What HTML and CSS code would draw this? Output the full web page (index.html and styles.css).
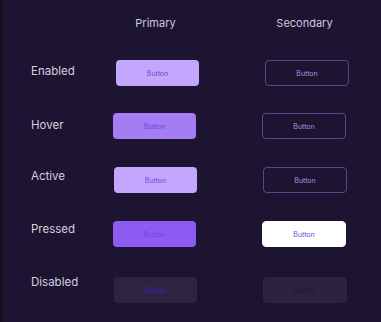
FILE: index.html
```html
<!DOCTYPE html>
<html lang="en">
<head>
    <meta charset="UTF-8">
    <meta name="viewport" content="width=device-width, initial-scale=1.0">
    <title>Button States</title>
    <link rel="stylesheet" href="styles.css">
</head>
<body>
    <div class="board">
        <header class="head-row">
            <span class="col-title">Primary</span>
            <span class="col-title col-title--secondary">Secondary</span>
        </header>

        <section class="states">
            <div class="row row--enabled">
                <span class="label">Enabled</span>
                <button class="btn btn-primary">Button</button>
                <button class="btn btn-secondary">Button</button>
            </div>
            <div class="row row--hover">
                <span class="label">Hover</span>
                <button class="btn btn-primary is-hover">Button</button>
                <button class="btn btn-secondary">Button</button>
            </div>
            <div class="row row--active">
                <span class="label">Active</span>
                <button class="btn btn-primary">Button</button>
                <button class="btn btn-secondary">Button</button>
            </div>
            <div class="row row--pressed">
                <span class="label">Pressed</span>
                <button class="btn btn-primary is-pressed">Button</button>
                <button class="btn btn-secondary is-pressed">Button</button>
            </div>
            <div class="row row--disabled">
                <span class="label">Disabled</span>
                <button class="btn btn-primary is-disabled">Button</button>
                <button class="btn btn-secondary is-disabled">Button</button>
            </div>
        </section>
    </div>
</body>
</html>
```

FILE: styles.css
```css
body {
    margin: 0;
    padding: 0;
    background: #1c1430;
    font-family: Inter, "Noto Sans", sans-serif;
    color: #d2cddd;
}

.board {
    min-height: 322px;
    border-left: 3px solid #161020;
    padding-left: 28px;
    box-sizing: border-box;
}

.head-row {
    display: flex;
    height: 46px;
    align-items: center;
}

.col-title {
    font-size: 11px;
    color: #cfc9dc;
    width: 83px;
    text-align: center;
    margin-left: 83px;
}

.col-title--secondary {
    margin-left: 66px;
}

.states {
    display: flex;
    flex-direction: column;
    gap: 28px;
    padding-top: 14px;
}

.row {
    display: flex;
    align-items: center;
    height: 26px;
}

.label {
    width: 83px;
    font-size: 11.5px;
    color: #d4d0de;
    padding-bottom: 4px;
}

.btn {
    width: 83px;
    height: 26px;
    border-radius: 4px;
    border: 0;
    padding: 0;
    font-family: Inter, "Noto Sans", sans-serif;
    font-size: 7px;
    color: #7446d4;
    box-sizing: border-box;
}

.btn-primary {
    background: #c3a6fd;
}

.btn-primary.is-hover {
    background: #a57cf4;
}

.btn-primary.is-pressed {
    background: #8c5cf2;
}

.btn-primary.is-disabled {
    background: #2d2442;
    color: #4a1fb0;
}

.btn-secondary {
    width: 84px;
    margin-left: 66px;
    background: transparent;
    border: 1px solid #5b4688;
    color: #a890e0;
}

.btn-secondary.is-pressed {
    background: #ffffff;
    border-color: #ffffff;
    color: #7446d4;
}

.btn-secondary.is-disabled {
    background: #2b2340;
    border-color: #2b2340;
    color: #221a34;
}

/* the artboard is hand placed, so rows drift a pixel or two */
.row--enabled .btn-primary { margin-left: 2px; }
.row--hover { margin-top: -1px; }
.row--hover .label { padding-bottom: 3px; }
.row--hover .btn-primary,
.row--pressed .btn-primary { margin-left: -1px; }
.row--active .label { padding-bottom: 9px; }
.row--pressed .label { padding-bottom: 10px; }
.row--disabled { margin-top: 2px; }
.row--disabled .label { padding-bottom: 16px; }
```
